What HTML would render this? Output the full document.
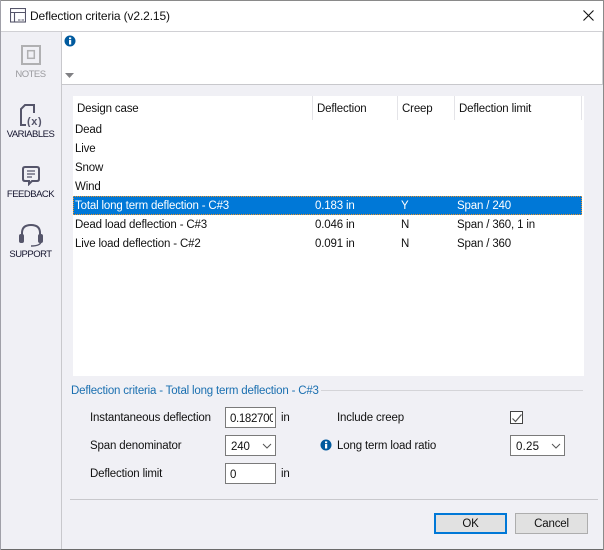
<!DOCTYPE html>
<html><head><meta charset="utf-8"><style>
html,body{margin:0;padding:0;width:604px;height:550px;overflow:hidden;background:#f0f0f5}
body{position:relative;font-family:"Liberation Sans",sans-serif;font-size:11.5px;letter-spacing:-.16px;color:#111}
.a{position:absolute}
.t{position:absolute;white-space:nowrap;line-height:16px;height:16px}
.box{position:absolute;box-sizing:border-box;border:1px solid #7a7a7a;background:#fff}
.s{position:absolute;left:0;width:61px;text-align:center;font-size:9.5px;letter-spacing:-.5px;line-height:12px;color:#14142e}
.w{color:#fff}
.h{position:absolute;top:96px;width:1px;height:24px;background:#e4e4e8}
</style></head><body>
<div class="a" style="left:0;top:1px;width:604px;height:30px;background:#fff"></div>
<div class="a" style="left:0;top:31px;width:604px;height:1px;background:#d0d0d4"></div>
<div class="a" style="left:0;top:0;width:604px;height:1px;background:#8a8a8a"></div>
<div class="a" style="left:0;top:549px;width:604px;height:1px;background:#6a6a6a"></div>
<div class="a" style="left:603px;top:0;width:1px;height:550px;background:#8a8a8a"></div>
<div class="a" style="left:0;top:0;width:1px;height:550px;background:#a0a0a8"></div>

<svg class="a" style="left:10px;top:8px" width="16" height="15" viewBox="0 0 16 15" fill="none" stroke="#55556a" stroke-width="1.1"><rect x=".5" y=".5" width="15" height="13.5"/><path d="M.5 4.5H15.5M4.5 4.5V14"/><path d="M8 12h2.5M11.5 12h2.5"/></svg>
<div class="t" style="left:30px;top:8px;font-size:12px;letter-spacing:-.12px">Deflection criteria (v2.2.15)</div>
<svg class="a" style="left:582px;top:9px" width="13" height="13" viewBox="0 0 13 13" stroke="#111" stroke-width="1.1"><path d="M1.5 1.5L11.5 11.5M11.5 1.5L1.5 11.5"/></svg>

<!-- sidebar -->
<div class="a" style="left:61px;top:32px;width:1px;height:517px;background:#c8c8cc"></div>
<svg class="a" style="left:21px;top:45px" width="20" height="20" viewBox="0 0 20 20" fill="none" stroke="#b0b0b2" stroke-width="2"><rect x="1" y="1" width="18" height="18"/><rect x="6.7" y="5.7" width="6.6" height="7.6" stroke-width="1.5"/></svg>
<div class="s" style="top:69px;color:#9a9a9e">NOTES</div>
<svg class="a" style="left:19px;top:103px" width="26" height="24" viewBox="0 0 26 24" fill="none" stroke="#55556a" stroke-width="2"><path d="M15 10V2H6L2 6V22H7"/><text x="8" y="22" font-family="Liberation Sans" font-size="11" font-weight="bold" letter-spacing=".6" fill="#55556a" stroke="none">(x)</text></svg>
<div class="s" style="top:129px">VARIABLES</div>
<svg class="a" style="left:22px;top:165px" width="18" height="21" viewBox="0 0 18 21" fill="none" stroke="#55556a" stroke-width="2"><path d="M3 2H15Q17 2 17 4V14Q17 16 15 16H10L7 19V16H3Q1 16 1 14V4Q1 2 3 2Z"/><path d="M5 6H13M5 9H13M5 12H10" stroke-width="1.3"/></svg>
<div class="s" style="top:189px">FEEDBACK</div>
<svg class="a" style="left:18px;top:223px" width="26" height="25" viewBox="0 0 26 25" fill="none" stroke="#55556a" stroke-width="2"><path d="M4 13V10Q4 2 13 2Q22 2 22 10V13"/><rect x="1" y="11" width="5" height="9" rx="2" fill="#55556a" stroke="none"/><rect x="20" y="11" width="5" height="9" rx="2" fill="#55556a" stroke="none"/><path d="M23 19Q22 23 13 23" stroke-width="1.5"/></svg>
<div class="s" style="top:249px">SUPPORT</div>

<!-- info panel -->
<div class="a" style="left:62px;top:32px;width:540px;height:52px;background:#fff;border-bottom:1px solid #c8c8cc;border-right:1px solid #d0d0d4"></div>
<svg class="a" style="left:64px;top:35px" width="12" height="12" viewBox="0 0 12 12"><circle cx="6" cy="6" r="5.5" fill="#005a9e"/><rect x="5" y="5" width="2.2" height="4.5" fill="#fff"/><rect x="5" y="2.4" width="2.2" height="1.8" fill="#fff"/></svg>
<svg class="a" style="left:65px;top:73px" width="10" height="6"><path d="M0 0H9L4.5 5Z" fill="#808084"/></svg>

<!-- table -->
<div class="a" style="left:73px;top:96px;width:511px;height:280px;background:#fff"></div>
<div class="h" style="left:312px"></div><div class="h" style="left:397px"></div><div class="h" style="left:454px"></div><div class="h" style="left:581px"></div>
<div class="t" style="left:77px;top:101px">Design case</div>
<div class="t" style="left:317px;top:101px">Deflection</div>
<div class="t" style="left:402px;top:101px">Creep</div>
<div class="t" style="left:459px;top:101px">Deflection limit</div>

<div class="t" style="left:75px;top:122px">Dead</div>
<div class="t" style="left:75px;top:141px">Live</div>
<div class="t" style="left:75px;top:160px">Snow</div>
<div class="t" style="left:75px;top:179px">Wind</div>

<div class="a" style="left:73px;top:196px;width:507px;height:17px;background:#0078d7;border:1px dotted #e8922a;box-sizing:content-box"></div>
<div class="t w" style="left:75px;top:198px">Total long term deflection - C#3</div>
<div class="t w" style="left:315px;top:198px">0.183 in</div>
<div class="t w" style="left:401px;top:198px">Y</div>
<div class="t w" style="left:457px;top:198px">Span / 240</div>

<div class="t" style="left:75px;top:217px">Dead load deflection - C#3</div>
<div class="t" style="left:315px;top:217px">0.046 in</div>
<div class="t" style="left:401px;top:217px">N</div>
<div class="t" style="left:457px;top:217px">Span / 360, 1 in</div>

<div class="t" style="left:75px;top:236px">Live load deflection - C#2</div>
<div class="t" style="left:315px;top:236px">0.091 in</div>
<div class="t" style="left:401px;top:236px">N</div>
<div class="t" style="left:457px;top:236px">Span / 360</div>

<!-- group -->
<div class="t" style="left:71px;top:383px;color:#1a6fb0;letter-spacing:-.19px">Deflection criteria - Total long term deflection - C#3</div>
<div class="a" style="left:321px;top:390px;width:262px;height:1px;background:#d4d4d8"></div>

<div class="t" style="left:90px;top:410px">Instantaneous deflection</div>
<div class="box" style="left:225px;top:407px;width:51px;height:21px;overflow:hidden"><div class="t" style="left:4px;top:3px;width:43px;overflow:hidden;letter-spacing:-.35px">0.182700</div></div>
<div class="t" style="left:281px;top:410px">in</div>

<div class="t" style="left:90px;top:438px">Span denominator</div>
<div class="box" style="left:225px;top:435px;width:51px;height:21px"><div class="t" style="left:5px;top:3px">240</div>
<svg class="a" style="left:36px;top:7px" width="10" height="6" fill="none" stroke="#555"><path d="M1 1L5 5L9 1"/></svg></div>

<div class="t" style="left:90px;top:466px">Deflection limit</div>
<div class="box" style="left:225px;top:463px;width:51px;height:21px"><div class="t" style="left:4px;top:3px">0</div></div>
<div class="t" style="left:281px;top:466px">in</div>

<div class="t" style="left:337px;top:410px">Include creep</div>
<div class="box" style="left:510px;top:411px;width:13px;height:13px;border-color:#444"></div>
<svg class="a" style="left:511px;top:412px" width="12" height="12" fill="none" stroke="#555" stroke-width="1.2"><path d="M1.5 6.5L4.5 9.5L10.5 2.5"/></svg>

<svg class="a" style="left:320px;top:439px" width="12" height="12" viewBox="0 0 12 12"><circle cx="6" cy="6" r="5.5" fill="#005a9e"/><rect x="5" y="5" width="2.2" height="4.5" fill="#fff"/><rect x="5" y="2.4" width="2.2" height="1.8" fill="#fff"/></svg>
<div class="t" style="left:337px;top:438px">Long term load ratio</div>
<div class="box" style="left:510px;top:435px;width:55px;height:21px"><div class="t" style="left:5px;top:3px;letter-spacing:.2px">0.25</div>
<svg class="a" style="left:40px;top:7px" width="10" height="6" fill="none" stroke="#555"><path d="M1 1L5 5L9 1"/></svg></div>

<div class="a" style="left:70px;top:499px;width:528px;height:1px;background:#c8c8cc"></div>

<div class="a" style="left:434px;top:513px;width:73px;height:21px;box-sizing:border-box;background:#e1e1e1;border:2px solid #0078d7;text-align:center;line-height:18px;font-size:11.5px">OK</div>
<div class="a" style="left:515px;top:513px;width:73px;height:21px;box-sizing:border-box;background:#e1e1e1;border:1px solid #adadad;text-align:center;line-height:20px;font-size:11.5px">Cancel</div>
</body></html>
